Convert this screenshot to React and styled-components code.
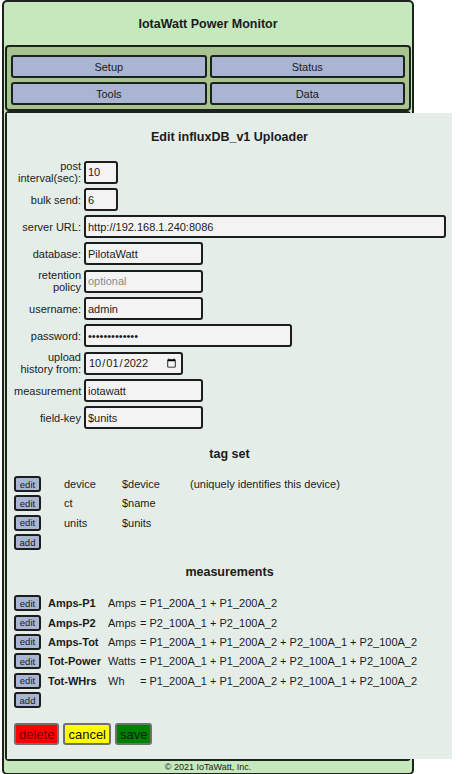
import React from 'react';
import styled, { createGlobalStyle } from 'styled-components';

const GlobalStyle = createGlobalStyle`
  html, body {
    margin: 0;
    background: #fff;
  }
  body {
    font-family: "Liberation Sans", Arial, sans-serif;
    color: #1b1b1b;
  }
  * {
    box-sizing: border-box;
  }
`;

const Frame = styled.div`
  width: 412px;
  margin-left: 2px;
  border: 2px solid #1d221d;
  border-radius: 5px;
  background: #c5e8bc;
  padding: 0 1px;
`;

const Header = styled.div`
  height: 43px;
  display: flex;
  align-items: center;
  justify-content: center;
  padding-top: 1px;
  font-size: 12.5px;
  font-weight: bold;
`;

const Nav = styled.div`
  display: grid;
  grid-template-columns: 1fr 1fr;
  gap: 4px 3px;
  padding: 8px 4px 4px;
  border: 2px solid #1d221d;
  border-radius: 4px;
  background: #a7c38f;
`;

const NavButton = styled.button`
  height: 23px;
  border: 2px solid #1d221d;
  border-radius: 3px;
  background: #aab5d3;
  font-family: inherit;
  font-size: 11px;
  color: #1b1b1b;
  padding: 0;
`;

const Content = styled.div`
  border: 2px solid #1d221d;
  border-radius: 4px;
`;

const Form = styled.div`
  width: 445px;
  background: #e5ede8;
  padding: 16px 7px 14px;
`;

const Title = styled.h2`
  margin: ${(p) => p.$mt || 0}px 0 0;
  font-size: 12.5px;
  line-height: 16px;
  font-weight: bold;
  text-align: center;
`;

const Fields = styled.div`
  display: flex;
  flex-direction: column;
  gap: 4px;
  margin-top: 15px;
`;

const FieldRow = styled.div`
  display: grid;
  grid-template-columns: 67px auto;
  column-gap: 3px;
  align-items: center;
  justify-content: start;
`;

const Label = styled.label`
  text-align: right;
  font-size: 11px;
  line-height: 12px;
`;

const Input = styled.input`
  width: ${(p) => p.$w}px;
  height: 23px;
  border: 2px solid #1d1d1d;
  border-radius: 3px;
  background: #f3f3f3;
  font-family: inherit;
  font-size: 11px;
  color: #1b1b1b;
  padding: 0 2px;
  margin: 0;
  outline: none;

  &::placeholder {
    color: #8a8a8a;
  }
`;

const List = styled.div`
  display: flex;
  flex-direction: column;
  gap: 3.4px;
  margin-top: ${(p) => p.$mt}px;
`;

const TagRow = styled.div`
  display: grid;
  grid-template-columns: 50px 58px 68px auto;
  height: 16px;
  align-items: center;
  font-size: 11px;
`;

const MeasureRow = styled.div`
  display: grid;
  grid-template-columns: 34px 60px 32px auto;
  height: 16px;
  align-items: center;
  font-size: 11px;
  white-space: nowrap;
`;

const Name = styled.span`
  font-weight: bold;
`;

const SmallButton = styled.button`
  width: 27px;
  height: 16px;
  border: 2px solid #1d1d1d;
  border-radius: 3px;
  background: #aab5d3;
  font-family: inherit;
  font-size: 9.5px;
  color: #1b1b1b;
  padding: 0;
`;

const Actions = styled.div`
  display: flex;
  gap: 4px;
  margin-top: 15px;
`;

const tones = {
  delete: { bg: '#ff0000', fg: '#6e0000' },
  cancel: { bg: '#ffff00', fg: '#111' },
  save: { bg: '#008000', fg: '#0b1f0b' },
};

const ActionButton = styled.button`
  height: 22px;
  padding: 0 3px;
  border: 2px solid #707070;
  border-radius: 3px;
  background: ${(p) => tones[p.$tone].bg};
  color: ${(p) => tones[p.$tone].fg};
  font-family: inherit;
  font-size: 13px;
`;

const Footer = styled.div`
  height: 12px;
  line-height: 12px;
  text-align: center;
  font-size: 9px;
`;

const fields = [
  { label: <>post<br />interval(sec):</>, value: '10', w: 34 },
  { label: 'bulk send:', value: '6', w: 34 },
  { label: 'server URL:', value: 'http://192.168.1.240:8086', w: 362 },
  { label: 'database:', value: 'PilotaWatt', w: 119 },
  { label: <>retention<br />policy</>, placeholder: 'optional', w: 119 },
  { label: 'username:', value: 'admin', w: 119 },
  { label: 'password:', value: 'iotawattpass1', type: 'password', w: 208 },
  { label: <>upload<br />history from:</>, value: '2022-10-01', type: 'date', w: 99 },
  { label: 'measurement', value: 'iotawatt', w: 119 },
  { label: 'field-key', value: '$units', w: 119 },
];

const tags = [
  ['device', '$device', '(uniquely identifies this device)'],
  ['ct', '$name', ''],
  ['units', '$units', ''],
];

const sum2 = '= P1_200A_1 + P1_200A_2 + P2_100A_1 + P2_100A_2';

const measurements = [
  ['Amps-P1', 'Amps', '= P1_200A_1 + P1_200A_2'],
  ['Amps-P2', 'Amps', '= P2_100A_1 + P2_100A_2'],
  ['Amps-Tot', 'Amps', sum2],
  ['Tot-Power', 'Watts', sum2],
  ['Tot-WHrs', 'Wh', sum2],
];

export default function App() {
  return (
    <>
      <GlobalStyle />
      <Frame>
        <Header>IotaWatt Power Monitor</Header>
        <Nav>
          <NavButton>Setup</NavButton>
          <NavButton>Status</NavButton>
          <NavButton>Tools</NavButton>
          <NavButton>Data</NavButton>
        </Nav>
        <Content>
          <Form>
            <Title>Edit influxDB_v1 Uploader</Title>
            <Fields>
              {fields.map((f, i) => (
                <FieldRow key={i}>
                  <Label>{f.label}</Label>
                  <Input
                    $w={f.w}
                    type={f.type || 'text'}
                    defaultValue={f.value}
                    placeholder={f.placeholder}
                  />
                </FieldRow>
              ))}
            </Fields>

            <Title $mt={17}>tag set</Title>
            <List $mt={14}>
              {tags.map(([key, val, note]) => (
                <TagRow key={key}>
                  <SmallButton>edit</SmallButton>
                  <span>{key}</span>
                  <span>{val}</span>
                  <span>{note}</span>
                </TagRow>
              ))}
              <TagRow>
                <SmallButton>add</SmallButton>
              </TagRow>
            </List>

            <Title $mt={14}>measurements</Title>
            <List $mt={15}>
              {measurements.map(([name, units, expr]) => (
                <MeasureRow key={name}>
                  <SmallButton>edit</SmallButton>
                  <Name>{name}</Name>
                  <span>{units}</span>
                  <span>{expr}</span>
                </MeasureRow>
              ))}
              <MeasureRow>
                <SmallButton>add</SmallButton>
              </MeasureRow>
            </List>

            <Actions>
              <ActionButton $tone="delete">delete</ActionButton>
              <ActionButton $tone="cancel">cancel</ActionButton>
              <ActionButton $tone="save">save</ActionButton>
            </Actions>
          </Form>
        </Content>
        <Footer>© 2021 IoTaWatt, Inc.</Footer>
      </Frame>
    </>
  );
}
